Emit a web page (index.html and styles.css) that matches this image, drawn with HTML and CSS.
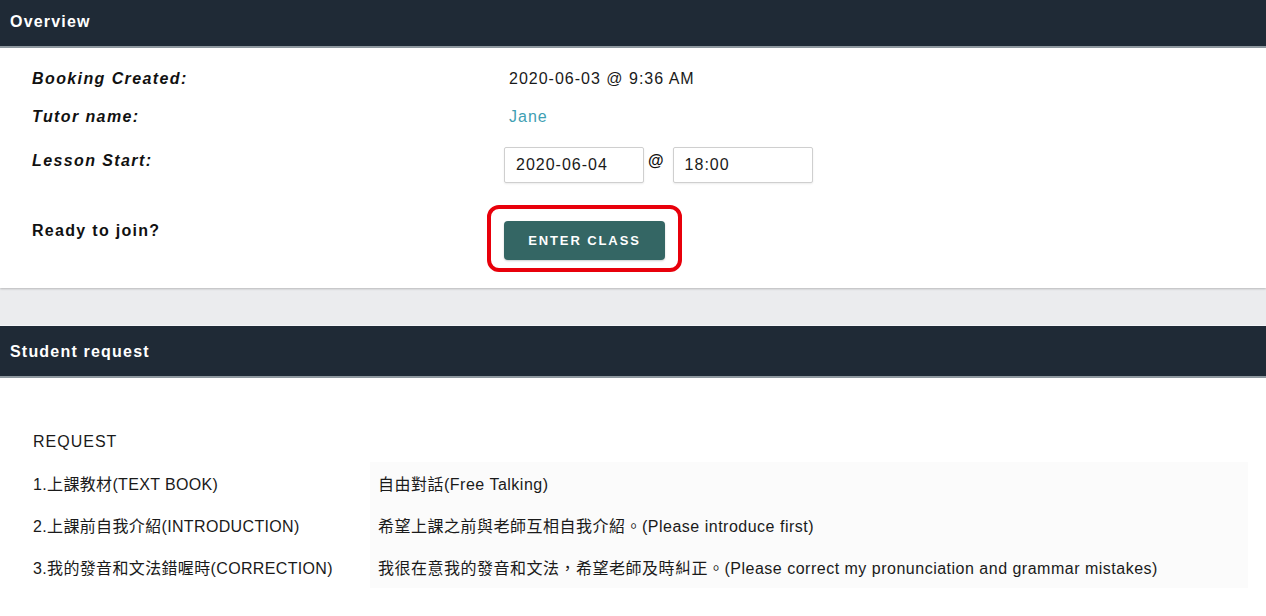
FILE: index.html
```html
<!DOCTYPE html>
<html lang="zh-Hant">
<head>
<meta charset="utf-8">
<title>Booking</title>
<link rel="stylesheet" href="styles.css">
</head>
<body>
<div class="page">
  <section class="card card-first">
    <header class="card-head">Overview</header>
    <div class="overview">
      <div class="row row-1">
        <div class="label">Booking Created:</div>
        <div class="value">2020-06-03 @ 9:36 AM</div>
      </div>
      <div class="row row-2">
        <div class="label">Tutor name:</div>
        <div class="value tutor">Jane</div>
      </div>
      <div class="row row-3">
        <div class="label label-top">Lesson Start:</div>
        <div class="inputs">
          <input class="field" type="text" value="2020-06-04">
          <span class="at">@</span>
          <input class="field" type="text" value="18:00">
        </div>
      </div>
      <div class="row row-4">
        <div class="label label-plain">Ready to join?</div>
        <div class="highlight">
          <button class="btn" type="button">ENTER CLASS</button>
        </div>
      </div>
    </div>
  </section>

  <section class="card card-second">
    <header class="card-head">Student request</header>
    <div class="request">
      <div class="req-title">REQUEST</div>
      <div class="req-table">
        <div class="req-row">
          <div class="req-key">1.上課教材(TEXT BOOK)</div>
          <div class="req-val">自由對話(Free Talking)</div>
        </div>
        <div class="req-row">
          <div class="req-key">2.上課前自我介紹(INTRODUCTION)</div>
          <div class="req-val">希望上課之前與老師互相自我介紹。(Please introduce first)</div>
        </div>
        <div class="req-row">
          <div class="req-key">3.我的發音和文法錯喔時(CORRECTION)</div>
          <div class="req-val">我很在意我的發音和文法，希望老師及時糾正。(Please correct my pronunciation and grammar mistakes)</div>
        </div>
      </div>
    </div>
  </section>
</div>
</body>
</html>
```

FILE: styles.css
```css
* { box-sizing: border-box; }

html, body {
  margin: 0;
  padding: 0;
}

body {
  background: #ebecee;
  font-family: "Liberation Sans", "Noto Sans CJK TC", Arial, sans-serif;
  color: #151515;
  overflow: hidden;
}

.page {
  width: 1266px;
}

.card {
  background: #ffffff;
  box-shadow: 0 1px 2px rgba(0, 0, 0, 0.22);
}

.card-first {
  margin-top: -4px;
}

.card-second {
  margin-top: 38px;
  box-shadow: 0 -1px 0 #f3f5f8;
  min-height: 300px;
}

.card-head {
  height: 52px;
  background: #1f2a36;
  border-bottom: 2px solid #8e989f;
  color: #ffffff;
  font-weight: bold;
  font-size: 16px;
  letter-spacing: 1.2px;
  line-height: 51px;
  padding-left: 10px;
}

/* Overview */
.overview {
  padding: 21px 0 16px 32px;
}

.row {
  display: grid;
  grid-template-columns: 472px 1fr;
  align-items: start;
}

.row-1 { height: 20px; }
.row-2 { margin-top: 18px; height: 20px; }
.row-3 { margin-top: 20px; height: 36px; }
.row-4 { margin-top: 22px; height: 67px; }

.label {
  font-size: 16px;
  line-height: 20px;
  font-weight: bold;
  font-style: italic;
  letter-spacing: 1.4px;
  color: #111;
}

.label-top { margin-top: 4px; }

.label-plain {
  font-style: normal;
  letter-spacing: 1.3px;
  margin-top: 16px;
}

.value {
  font-size: 16px;
  line-height: 20px;
  letter-spacing: 1px;
  padding-left: 5px;
  color: #1a1a1a;
}

.tutor {
  color: #3fa0b3;
}

.inputs {
  display: flex;
  align-items: flex-start;
}

.field {
  width: 140px;
  height: 36px;
  border: 1px solid #cfcfcf;
  border-radius: 2px;
  box-shadow: 0 1px 2px rgba(0, 0, 0, 0.08);
  background: #fff;
  padding: 0 11px;
  font-family: "Liberation Sans", Arial, sans-serif;
  font-size: 16px;
  letter-spacing: 1px;
  color: #1a1a1a;
  outline: none;
}

.at {
  font-weight: bold;
  font-size: 16px;
  line-height: 18px;
  margin: 5px 9px 0 4px;
  color: #111;
}

.highlight {
  margin-left: -17px;
  width: 195px;
  height: 67px;
  border: 4px solid #e8000b;
  border-radius: 12px;
  padding: 12px 13px 8px 13px;
}

.btn {
  display: block;
  width: 161px;
  height: 39px;
  border: 0;
  border-radius: 4px;
  background: #346664;
  color: #ffffff;
  font-family: "Liberation Sans", Arial, sans-serif;
  font-weight: bold;
  font-size: 13px;
  letter-spacing: 1.9px;
  padding: 0;
  box-shadow: 0 1px 2px rgba(0, 0, 0, 0.2);
}

/* Student request */
.request {
  padding: 54px 18px 0 33px;
  font-size: 16px;
  letter-spacing: 1px;
  color: #1a1a1a;
}

.req-title {
  line-height: 20px;
}

.req-table {
  margin-top: 10px;
  margin-left: -33px;
  padding-left: 33px;
}

.req-row {
  display: grid;
  grid-template-columns: 337px 1fr;
  height: 42px;
}

.req-key {
  padding-top: 4px;
  line-height: 38px;
  letter-spacing: 0.35px;
}

.req-val {
  padding-top: 4px;
  line-height: 38px;
  background: #fbfbfb;
  padding-left: 8px;
  letter-spacing: 0.5px;
  white-space: nowrap;
}
```
